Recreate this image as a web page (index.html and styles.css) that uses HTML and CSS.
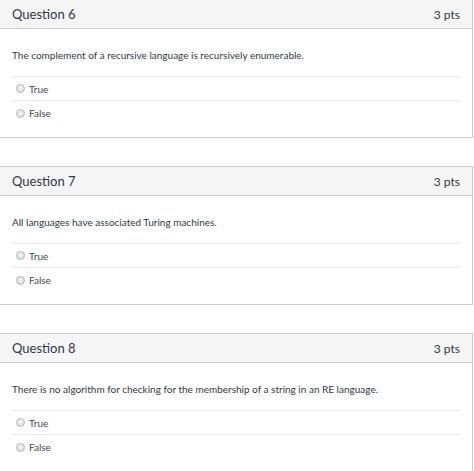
FILE: index.html
```html
<!DOCTYPE html>
<html>
<head>
<meta charset="utf-8">
<link rel="stylesheet" href="styles.css">
</head>
<body>
<div class="quiz">
  <div class="card">
    <div class="header"><span class="title">Question 6</span><span class="pts">3 pts</span></div>
    <div class="body">
      <p class="text">The complement of a recursive language is recursively enumerable.</p>
      <div class="answers">
        <label class="answer"><span class="radio"></span><span>True</span></label>
        <label class="answer"><span class="radio"></span><span>False</span></label>
      </div>
    </div>
  </div>
  <div class="card">
    <div class="header"><span class="title">Question 7</span><span class="pts">3 pts</span></div>
    <div class="body">
      <p class="text">All languages have associated Turing machines.</p>
      <div class="answers">
        <label class="answer"><span class="radio"></span><span>True</span></label>
        <label class="answer"><span class="radio"></span><span>False</span></label>
      </div>
    </div>
  </div>
  <div class="card">
    <div class="header"><span class="title">Question 8</span><span class="pts">3 pts</span></div>
    <div class="body">
      <p class="text">There is no algorithm for checking for the membership of a string in an RE language.</p>
      <div class="answers">
        <label class="answer"><span class="radio"></span><span>True</span></label>
        <label class="answer"><span class="radio"></span><span>False</span></label>
      </div>
    </div>
  </div>
</div>
</body>
</html>
```
FILE: styles.css
```css
html, body {
  margin: 0;
  padding: 0;
  background: #ffffff;
}
body {
  font-family: Lato, "Open Sans", sans-serif;
  color: #2d3b45;
}
.quiz {
  width: 473px;
  margin-top: -1px;
  display: flex;
  flex-direction: column;
  gap: 28px;
}
.card {
  border: 1px solid #c7cdd1;
  border-left: none;
  background: #fff;
}
.header {
  height: 28px;
  background: #f5f5f5;
  border-bottom: 1px solid #c7cdd1;
  display: flex;
  align-items: center;
  justify-content: space-between;
  padding: 0 12px 0 12px;
}
.title {
  font-size: 13px;
  font-weight: 400;
  color: #2d3b45;
}
.pts {
  font-size: 12px;
  color: #2d3b45;
}
.body {
  padding: 19px 12px 12px 12px;
}
.text {
  margin: 0 0 14px 0;
  font-size: 10px;
  line-height: 14px;
  color: #2d3b45;
}
.answers {
  display: flex;
  flex-direction: column;
}
.answer {
  display: flex;
  align-items: center;
  height: 23px;
  border-top: 1px solid #e8e8e8;
  font-size: 10px;
  color: #3d4a54;
}
.answer:last-child {
  height: 24px;
}
.radio {
  width: 7px;
  height: 7px;
  border-radius: 50%;
  border: 1px solid #b8b8b8;
  background: radial-gradient(circle at 50% 40%, #f4f4f4, #d6d6d6);
  margin: 0 4px 0 4px;
}
```
